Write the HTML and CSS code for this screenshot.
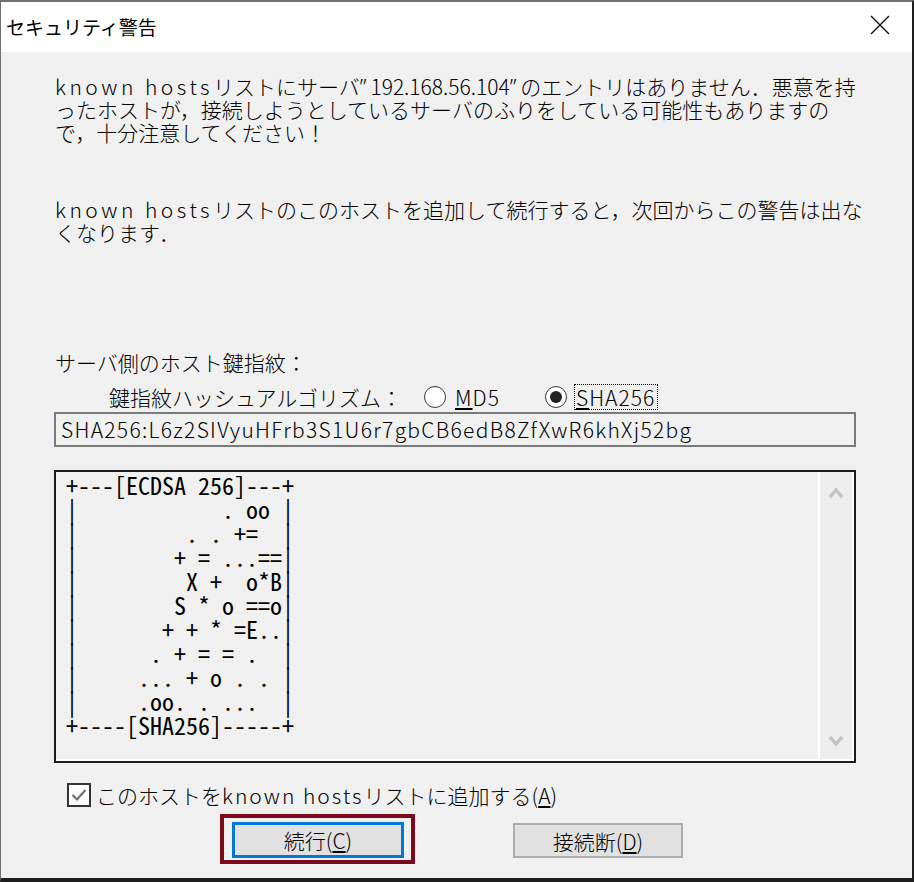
FILE: index.html
```html
<!DOCTYPE html>
<html lang="ja">
<head>
<meta charset="utf-8">
<title>セキュリティ警告</title>
<link rel="stylesheet" href="styles.css">
</head>
<body>
<div class="window">
  <div class="titlebar">
    <span class="title">セキュリティ警告</span>
    <svg class="close" width="20" height="20" viewBox="0 0 20 20"><path d="M1 1L19 19M19 1L1 19" stroke="#111" stroke-width="1.4" fill="none"/></svg>
  </div>
  <div class="body">
    <p class="msg msg1"><span class="kh">known hosts</span>リストにサーバ<span class="q">”</span>192.168.56.104<span class="q">”</span>のエントリはありません．悪意を持<br>ったホストが，接続しようとしているサーバのふりをしている可能性もありますの<br>で，十分注意してください！</p>
    <p class="msg msg2"><span class="kh">known hosts</span>リストのこのホストを追加して続行すると，次回からこの警告は出な<br>くなります．</p>
    <p class="msg label-fp">サーバ側のホスト鍵指紋：</p>
    <div class="algo-row">
      <span class="algo-label">鍵指紋ハッシュアルゴリズム：</span>
      <span class="radio md5"><span class="radio-circle"></span><span class="radio-text"><u>M</u>D5</span></span>
      <span class="radio sha"><span class="radio-circle checked"></span><span class="radio-text focus"><u>S</u>HA256</span></span>
    </div>
    <div class="fp-box">SHA256:L6z2SIVyuHFrb3S1U6r7gbCB6edB8ZfXwR6khXj52bg</div>
    <div class="art-box">
      <div class="art-inner">
        <pre class="art">+---[ECDSA 256]---+
|            . oo |
|         . . +=  |
|        + = ...==|
|         X +  o*B|
|        S * o ==o|
|       + + * =E..|
|      . + = = .  |
|     ... + o . . |
|     .oo. . ...  |
+----[SHA256]-----+</pre>
        <div class="scrollbar">
          <svg class="chev up" width="14" height="12" viewBox="0 0 14 12"><path d="M1 11L7 4L13 11" stroke="#c2c2c2" stroke-width="3.4" fill="none"/></svg>
          <svg class="chev down" width="14" height="12" viewBox="0 0 14 12"><path d="M1 1L7 8L13 1" stroke="#c2c2c2" stroke-width="3.4" fill="none"/></svg>
        </div>
      </div>
    </div>
    <div class="check-row">
      <span class="checkbox"><svg width="20" height="20" viewBox="0 0 20 20"><path d="M3.5 10L8 14.5L16.5 5" stroke="#707070" stroke-width="2.2" fill="none"/></svg></span>
      <span class="check-label">このホストを<span class="kh">known hosts</span>リストに追加する(<u>A</u>)</span>
    </div>
    <div class="buttons">
      <div class="highlight"><div class="btn default">続行(<u>C</u>)</div></div>
      <div class="btn other">接続断(<u>D</u>)</div>
    </div>
  </div>
</div>
</body>
</html>
```

FILE: styles.css
```css
* { box-sizing: border-box; }
html, body { margin: 0; padding: 0; }
body {
  background: #f0f0f0;
  font-family: "Noto Sans CJK JP", "Noto Sans", sans-serif;
  font-weight: 300;
  color: #000;
}
.window {
  width: 914px;
  height: 882px;
  border-top: 2px solid #6f6f6f;
  border-left: 1px solid #6f6f6f;
  border-right: 2px solid #1e1e1e;
  border-bottom: 4px solid #1e1e1e;
  background: #f0f0f0;
  display: flex;
  flex-direction: column;
}
.titlebar {
  height: 50px;
  flex-shrink: 0;
  background: #fff;
  display: flex;
  align-items: center;
  justify-content: space-between;
  padding-left: 5px;
  padding-right: 22px;
}
.title { font-size: 19px; line-height: 24px; font-weight: 400; }
.close { margin-top: -5px; }
.body {
  flex: 1;
  display: flex;
  flex-direction: column;
  align-items: flex-start;
}
.msg {
  margin: 0 0 0 54px;
  height: auto;
  font-size: 21px;
  line-height: 23px;
  white-space: nowrap;
}
.kh { letter-spacing: 3.5px; }
.q {
  font-family: "Noto Sans", "Liberation Sans", sans-serif;
  line-height: 0;
  padding-right: 4px;
}
.msg1 { margin-top: 23px; height: 69px; }
.msg2 { margin-top: 53.5px; }
.label-fp { margin-top: 107px; }
.algo-row {
  margin: 11.5px 0 0 108px;
  height: 24px;
  display: flex;
  align-items: center;
  font-size: 21px;
  line-height: 24px;
  white-space: nowrap;
}
.algo-label { width: 315px; }
.radio { display: flex; align-items: center; }
.radio.md5 { width: 121px; }
.radio-circle {
  width: 22px;
  height: 22px;
  border-radius: 50%;
  border: 1.5px solid #3a3a3a;
  background: #fff;
  margin-right: 8px;
  position: relative;
}
.radio-circle.checked::after {
  content: "";
  position: absolute;
  left: 3.5px;
  top: 3.5px;
  width: 12px;
  height: 12px;
  border-radius: 50%;
  background: #222;
}
.radio-text { padding: 0 2px 0 1px; letter-spacing: 1px; }
.radio-text.focus { outline: 1px dotted #000; outline-offset: 0; }
.fp-box {
  margin: 3px 0 0 53px;
  width: 802px;
  height: 35px;
  border: 2px solid #7a7a7a;
  background: #f0f0f0;
  padding-left: 5px;
  font-size: 21px;
  line-height: 31px;
  letter-spacing: 1.3px;
  white-space: nowrap;
}
.art-box {
  margin: 23px 0 0 53px;
  width: 802px;
  height: 293px;
  border: 2px solid #1c1c1c;
}
.art-inner {
  height: 100%;
  display: flex;
  border-right: 2px solid #fff;
  border-bottom: 2px solid #fff;
}
.art {
  flex: 1;
  margin: 0;
  padding: 1px 0 0 10px;
  font-family: "Noto Sans Mono CJK JP", "Liberation Mono", monospace;
  font-weight: 400;
  font-size: 24px;
  line-height: 24px;
  color: #000;
}
.scrollbar {
  width: 34px;
  border-left: 2px solid #fff;
  background: #ededed;
  display: flex;
  flex-direction: column;
  align-items: center;
  justify-content: space-between;
  padding: 14px 0 11px;
}
.check-row {
  margin: 20px 0 0 66px;
  height: 24px;
  display: flex;
  align-items: center;
}
.checkbox {
  width: 24px;
  height: 24px;
  border: 2px solid #333;
  background: #fff;
  display: flex;
  align-items: center;
  justify-content: center;
  margin-right: 5px;
}
.check-label { font-size: 21px; line-height: 24px; white-space: nowrap; }
.check-label .kh { letter-spacing: 2px; }
.buttons {
  margin: 7px 0 0 219px;
  display: flex;
  align-items: flex-start;
}
.highlight {
  width: 195px;
  height: 50px;
  border: 4px solid #7b0a1f;
  padding: 4px 7px 2px 8px;
}
.btn {
  display: flex;
  align-items: center;
  justify-content: center;
  background: #e1e1e1;
  font-size: 21px;
  line-height: 24px;
}
.btn.default {
  width: 172px;
  height: 36px;
  border: 3px solid #0078d7;
}
.btn.other {
  margin: 9px 0 0 98px;
  width: 170px;
  height: 35px;
  border: 2px solid #adadad;
}
```
